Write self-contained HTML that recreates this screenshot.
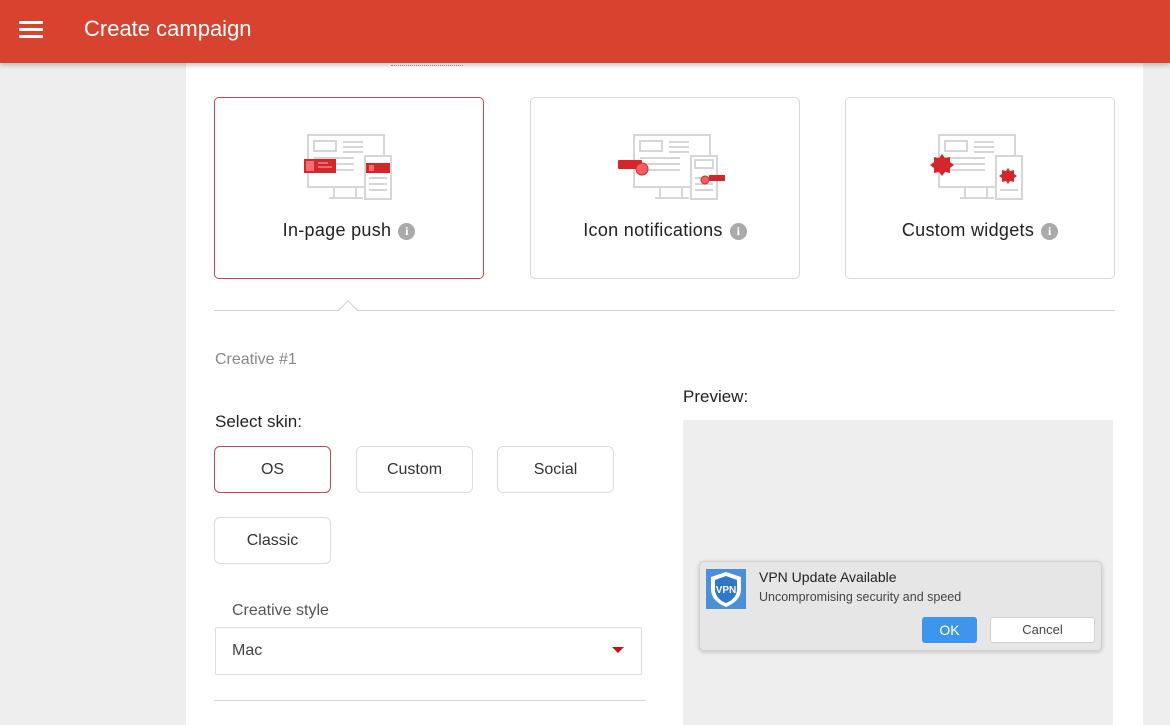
<!DOCTYPE html>
<html><head><meta charset="utf-8"><style>
*{box-sizing:border-box;margin:0;padding:0}
body{width:1170px;height:725px;overflow:hidden;background:#eeeeee;font-family:"Liberation Sans",sans-serif;position:relative;color:#222}
.hdr{position:absolute;left:0;top:0;width:1170px;height:63px;background:#d8432f;box-shadow:0 2px 5px rgba(0,0,0,.25);z-index:5}
.hdr .t{position:absolute;left:84px;top:16px;color:#fff;font-size:22px;}
.hb{position:absolute;left:19px;width:24px;height:3px;background:#fff;border-radius:1px}
.panel{position:absolute;left:186px;top:0;width:957px;height:725px;background:#fff}
.abs{position:absolute}
.card{position:absolute;top:97px;width:270px;height:182px;border:1px solid #d9d9d9;border-radius:5px;background:#fff}
.card.sel{border-color:#c1474a}
.card .lbl{position:absolute;top:122px;left:0;width:100%;text-align:center;font-size:18px;color:#222;letter-spacing:0.3px}
.info{display:inline-block;width:17px;height:17px;border-radius:50%;background:#aaa;color:#fff;font-size:12px;font-weight:bold;line-height:17px;text-align:center;vertical-align:1px;margin-left:7px;font-family:"Liberation Serif",serif;letter-spacing:0}
.card svg{position:absolute;left:84px;top:34px}
.btn{position:absolute;width:117px;height:47px;border:1px solid #dcdcdc;border-radius:6px;text-align:center;line-height:45px;font-size:16px;color:#333}
</style></head><body>
<div class="panel"></div>
<div class="hdr"><div class="hb" style="top:21px"></div><div class="hb" style="top:28px"></div><div class="hb" style="top:35px"></div><div class="t">Create campaign</div></div>
<div class="abs" style="left:391px;top:65px;width:72px;border-top:1px dotted #999"></div>

<div class="card sel" style="left:214px">
<svg width="100" height="70" viewBox="0 0 100 70"><g fill="none" stroke="#d6d6d6" stroke-width="2"><rect x="9" y="3" width="76" height="52"/><rect x="15" y="9" width="22" height="10"/><path d="M44 10h20M44 15h20M44 20h20M15 26h40M15 32h40M15 38h40M35 56v10M57 56v10M30 66h34"/><rect x="66" y="24" width="26" height="43" fill="#fff"/><path d="M70 46h18M70 52h18M70 58h18"/></g>
<rect x="5" y="27" width="32" height="14" fill="#d3272c"/><rect x="7" y="29" width="8" height="10" fill="#f07070"/><path d="M19 31h10M19 35h14" stroke="#f6b0b0"/>
<rect x="67" y="31" width="24" height="10" fill="#d3272c"/><rect x="70" y="33" width="5" height="6" fill="#f07070"/></svg>
<div class="lbl">In-page push<span class="info">i</span></div></div>

<div class="card" style="left:530px">
<svg width="110" height="70" viewBox="-10 0 110 70"><g fill="none" stroke="#d6d6d6" stroke-width="2"><rect x="9" y="3" width="76" height="52"/><rect x="15" y="9" width="22" height="10"/><path d="M44 10h20M44 15h20M44 20h20M15 26h40M15 32h40M15 38h40M35 56v10M57 56v10M30 66h34"/><rect x="66" y="24" width="26" height="43" fill="#fff"/><rect x="70" y="28" width="18" height="8"/><path d="M70 46h18M70 52h18M70 58h18"/></g>
<rect x="-7" y="28" width="24" height="9" rx="1" fill="#d3272c"/><circle cx="17" cy="37" r="6" fill="#f06060" stroke="#d3272c"/><circle cx="80" cy="48" r="4" fill="#f06060" stroke="#d3272c"/><rect x="84" y="43" width="18" height="6" rx="1" fill="#d3272c"/></svg>
<div class="lbl">Icon notifications<span class="info">i</span></div></div>

<div class="card" style="left:845px">
<svg width="100" height="70" viewBox="0 0 100 70"><g fill="none" stroke="#d6d6d6" stroke-width="2"><rect x="9" y="3" width="76" height="52"/><rect x="15" y="9" width="22" height="10"/><path d="M44 10h20M44 15h20M44 20h20M15 26h40M15 32h40M15 38h40M35 56v10M57 56v10M30 66h34"/><rect x="66" y="24" width="26" height="43" fill="#fff"/><path d="M70 58h18"/></g>
<polygon points="12,22 15,26 20,25 20,30 24,33 20,36 20,41 15,40 12,44 9,40 4,41 4,36 0,33 4,30 4,25 9,26" fill="#d3272c"/>
<polygon points="78,36 80,39 84,38 84,42 87,44 84,46 84,50 80,49 78,52 76,49 72,50 72,46 69,44 72,42 72,38 76,39" fill="#d3272c"/></svg>
<div class="lbl">Custom widgets<span class="info">i</span></div></div>

<div class="abs" style="left:214px;top:310px;width:901px;border-top:1px solid #d0d0d0"></div>
<div class="abs" style="left:341px;top:303px;width:14px;height:14px;background:#fff;border-left:1px solid #d0d0d0;border-top:1px solid #d0d0d0;transform:rotate(45deg)"></div>

<div class="abs" style="left:215px;top:351px;font-size:16px;color:#888">Creative #1</div>
<div class="abs" style="left:215px;top:412px;font-size:17px;color:#222">Select skin:</div>
<div class="btn" style="left:214px;top:446px;border-color:#c1474a">OS</div>
<div class="btn" style="left:356px;top:446px">Custom</div>
<div class="btn" style="left:497px;top:446px">Social</div>
<div class="btn" style="left:214px;top:517px">Classic</div>
<div class="abs" style="left:232px;top:602px;font-size:16px;color:#555">Creative style</div>
<div class="abs" style="left:215px;top:627px;width:427px;height:48px;border:1px solid #dcdcdc;border-radius:2px"></div>
<div class="abs" style="left:232px;top:642px;font-size:16px;color:#444">Mac</div>
<div class="abs" style="left:612px;top:647px;width:0;height:0;border-left:6px solid transparent;border-right:6px solid transparent;border-top:6px solid #c0141c"></div>
<div class="abs" style="left:214px;top:700px;width:432px;border-top:1px solid #d8d8d8"></div>

<div class="abs" style="left:683px;top:387px;font-size:17px;color:#222">Preview:</div>
<div class="abs" style="left:683px;top:420px;width:430px;height:305px;background:#eeeeee"></div>
<div class="abs" style="left:699px;top:561px;width:403px;height:90px;background:#e6e6e6;border:1px solid #d0d0d0;border-radius:5px;box-shadow:0 1px 4px rgba(0,0,0,.2)"></div>
<svg class="abs" style="left:706px;top:569px" width="40" height="40" viewBox="0 0 40 40"><rect width="40" height="40" fill="#4a8fd8"/><path d="M20 3 L35 8 V20 C35 30 27 35 20 38 C13 35 5 30 5 20 V8 Z" fill="#fff"/><path d="M20 7 L31 11 V20 C31 28 25 32 20 34 C15 32 9 28 9 20 V11 Z" fill="#2f78c8"/><text x="20" y="24" fill="#fff" font-size="10" font-weight="bold" text-anchor="middle" font-family="Liberation Sans,sans-serif">VPN</text></svg>
<div class="abs" style="left:759px;top:569px;font-size:14px;color:#222">VPN Update Available</div>
<div class="abs" style="left:759px;top:590px;font-size:12.5px;color:#444">Uncompromising security and speed</div>
<div class="abs" style="left:922px;top:617px;width:55px;height:26px;background:#3d95ec;border-radius:3px;color:#fff;font-size:14px;text-align:center;line-height:26px">OK</div>
<div class="abs" style="left:990px;top:617px;width:105px;height:26px;background:#fff;border:1px solid #d0d0d0;border-radius:3px;color:#444;font-size:13px;text-align:center;line-height:24px">Cancel</div>
</body></html>
